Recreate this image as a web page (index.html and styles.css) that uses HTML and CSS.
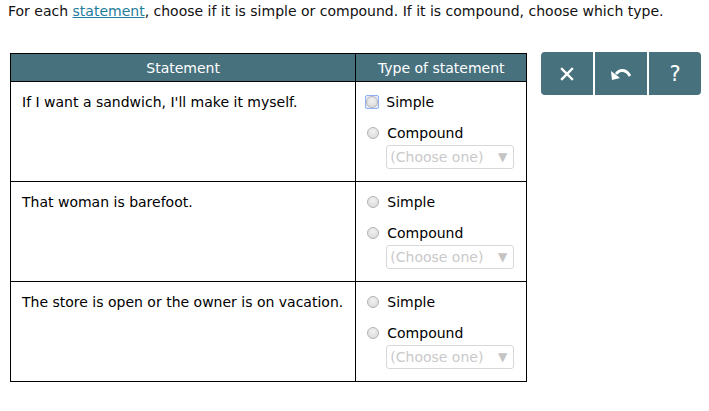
FILE: index.html
```html
<!DOCTYPE html>
<html>
<head>
<meta charset="utf-8">
<link rel="stylesheet" href="styles.css">
</head>
<body>
<p class="prompt">For each <a class="term" href="#">statement</a>, choose if it is simple or compound. If it is compound, choose which type.</p>
<div class="work">
  <table class="grid">
    <thead>
      <tr><th class="c1">Statement</th><th class="c2">Type of statement</th></tr>
    </thead>
    <tbody>
      <tr>
        <td class="stmt">If I want a sandwich, I'll make it myself.</td>
        <td class="opts">
          <div class="opt"><span class="ring"><span class="radio"></span></span>Simple</div>
          <div class="opt"><span class="radio"></span>Compound</div>
          <div class="select"><span>(Choose one)</span><span class="arrow">▼</span></div>
        </td>
      </tr>
      <tr>
        <td class="stmt">That woman is barefoot.</td>
        <td class="opts">
          <div class="opt"><span class="radio"></span>Simple</div>
          <div class="opt"><span class="radio"></span>Compound</div>
          <div class="select"><span>(Choose one)</span><span class="arrow">▼</span></div>
        </td>
      </tr>
      <tr>
        <td class="stmt">The store is open or the owner is on vacation.</td>
        <td class="opts">
          <div class="opt"><span class="radio"></span>Simple</div>
          <div class="opt"><span class="radio"></span>Compound</div>
          <div class="select"><span>(Choose one)</span><span class="arrow">▼</span></div>
        </td>
      </tr>
    </tbody>
  </table>
  <div class="tools">
    <button class="tool" aria-label="Clear">
      <svg width="14" height="14" viewBox="0 0 14 14"><path d="M2 2 L12 12 M12 2 L2 12" stroke="#fff" stroke-width="2.4" stroke-linecap="square"/></svg>
    </button>
    <button class="tool" aria-label="Undo">
      <svg width="24" height="14" viewBox="0 0 24 14"><path d="M7 7 C11 2 17 2 21 9" stroke="#fff" stroke-width="2.8" fill="none"/><path d="M2 4 L3 13 L11 11 Z" fill="#fff"/></svg>
    </button>
    <button class="tool" aria-label="Help"><span class="q">?</span></button>
  </div>
</div>
</body>
</html>
```
FILE: styles.css
```css
html, body { margin: 0; padding: 0; background: #fff; }
body {
  font-family: "DejaVu Sans", Verdana, sans-serif;
  font-size: 14px;
  color: #000;
  padding: 0 8px;
}
.prompt {
  margin: 0;
  padding-top: 2px;
  font-size: 14px;
  line-height: 18px;
  color: #111;
}
.term { color: #1f7d9c; text-decoration: underline; }
.work {
  display: flex;
  align-items: flex-start;
  margin-top: 33px;
  margin-left: 2px;
}
.grid {
  border-collapse: collapse;
  border: 1px solid #000;
}
.grid th {
  background: #48717e;
  color: #fff;
  font-weight: normal;
  font-size: 14px;
  height: 27px;
  padding: 0;
  border: 1px solid #000;
  text-align: center;
}
.c1 { width: 345px; }
.c2 { width: 170px; }
.grid td {
  border: 1px solid #000;
  vertical-align: top;
  height: 100px;
  box-sizing: border-box;
  padding: 0;
}
.stmt { padding: 12px 11px 0 11px !important; line-height: 17px; }
.opts { padding: 12px 0 0 10px !important; }
.opt {
  display: flex;
  align-items: center;
  height: 16px;
  margin-bottom: 15px;
  line-height: 16px;
}
.opt + .opt { margin-bottom: 4px; }
.radio {
  width: 12px;
  height: 12px;
  border-radius: 50%;
  border: 1px solid #b5b5b5;
  background: radial-gradient(circle at 50% 35%, #f2f2f2 0%, #d6d6d6 100%);
  margin-right: 8px;
  box-sizing: border-box;
  flex: none;
  margin-left: 1px;
}
.ring {
  width: 14px;
  height: 14px;
  box-sizing: border-box;
  border: 1px solid #8fb1f3;
  border-radius: 2px;
  background: #e4ecfb;
  display: flex;
  align-items: center;
  justify-content: center;
  margin-right: 7px;
  margin-left: 0;
  flex: none;
}
.ring .radio { margin: 0; }
.opt .ring + * { margin: 0; }
.ring { margin-right: 7px; }
.opt:has(.ring) { margin-left: -1px; }
.select {
  margin-left: 20px;
  width: 128px;
  height: 24px;
  box-sizing: border-box;
  border: 1px solid #d8d8d8;
  border-radius: 3px;
  display: flex;
  align-items: center;
  justify-content: space-between;
  padding: 0 6px 0 3px;
  color: #c9c9c9;
  font-size: 14px;
}
.arrow { font-size: 12px; color: #c4c4c4; }
.tools {
  display: flex;
  margin-left: 14px;
  margin-top: -1px;
  border-radius: 4px;
  overflow: hidden;
  gap: 2px;
  background: #fff;
}
.tool {
  width: 52px;
  height: 43px;
  background: #48717e;
  border: 0;
  padding: 0;
  display: flex;
  align-items: center;
  justify-content: center;
}
.q {
  color: #fff;
  font-family: "DejaVu Sans", sans-serif;
  font-size: 21px;
  font-weight: normal;
}
```
